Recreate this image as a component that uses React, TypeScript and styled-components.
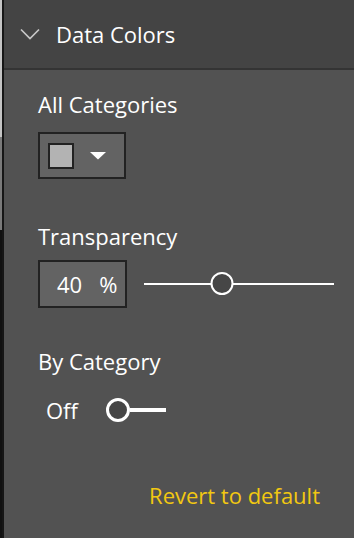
import React from "react";
import styled, { createGlobalStyle } from "styled-components";

const Global = createGlobalStyle`
  html, body { margin: 0; padding: 0; background: #525252; }
  body { font-family: "Open Sans", "Noto Sans", sans-serif; }
  #root { width: 354px; height: 538px; }
`;

const Frame = styled.div`
  display: flex;
  width: 354px;
  height: 538px;
  overflow: hidden;
`;

const EdgeStrip = styled.div`
  width: 2px;
  flex: none;
  background: linear-gradient(#c4c4c4 0 137px, #7a7a7a 137px 230px, #111 230px);
`;

const EdgeLine = styled.div`
  width: 2px;
  flex: none;
  background: #161616;
`;

const Pane = styled.div`
  flex: 1;
  display: flex;
  flex-direction: column;
  background: #525252;
  color: #fff;
  font-size: 22px;
`;

const Header = styled.div`
  height: 70px;
  flex: none;
  display: flex;
  align-items: center;
  gap: 16px;
  padding-left: 16px;
  background: #444444;
  border-bottom: 2px solid #343434;
  box-sizing: border-box;
  line-height: 30px;
`;

const Body = styled.div`
  display: flex;
  flex-direction: column;
  padding: 19px 0 0 34px;
`;

const Label = styled.div<{ $top?: number }>`
  line-height: 30px;
  margin-top: ${(p) => p.$top ?? 0}px;
`;

const ColorButton = styled.div`
  margin-top: 13px;
  width: 88px;
  height: 47px;
  box-sizing: border-box;
  border: 2px solid #222;
  background: #636363;
  display: flex;
  align-items: center;
  padding-left: 8px;
  gap: 16px;
`;

const Swatch = styled.div`
  width: 26px;
  height: 26px;
  box-sizing: border-box;
  border: 2px solid #222;
  background: #b3b3b3;
  margin-top: 1px;
`;

const Row = styled.div<{ $top?: number; $gap?: number }>`
  display: flex;
  align-items: center;
  gap: ${(p) => p.$gap ?? 0}px;
  margin-top: ${(p) => p.$top ?? 0}px;
`;

const PercentBox = styled.div`
  width: 89px;
  height: 48px;
  box-sizing: border-box;
  border: 2px solid #222;
  background: #636363;
  display: flex;
  align-items: center;
  padding-left: 17px;
  gap: 17px;
  line-height: 30px;
`;

const Slider = styled.div`
  position: relative;
  width: 190px;
  height: 24px;
  margin-left: 17px;
  display: flex;
  align-items: center;
`;

const Track = styled.div`
  width: 100%;
  height: 2px;
  background: #fff;
`;

const Thumb = styled.div`
  position: absolute;
  top: 0px;
  width: 23px;
  height: 23px;
  box-sizing: border-box;
  border: 2px solid #fff;
  border-radius: 50%;
  background: #464646;
  transform: translateX(-50%);
`;

const OffText = styled.span`
  line-height: 30px;
  margin-left: 8px;
`;

const Toggle = styled.div`
  display: flex;
  align-items: center;
`;

const Knob = styled.div`
  width: 24px;
  height: 24px;
  box-sizing: border-box;
  border: 3px solid #fff;
  border-radius: 50%;
  background: #464646;
`;

const KnobLine = styled.div`
  width: 36px;
  height: 4px;
  background: #fff;
`;

const Revert = styled.div`
  margin-top: 55px;
  align-self: flex-end;
  margin-right: 34px;
  color: #f2c811;
  line-height: 30px;
`;

const Chevron = () => (
  <svg width="20" height="12" viewBox="0 0 20 12">
    <path d="M1 1.5 L10 10.5 L19 1.5" fill="none" stroke="#c8c8c8" strokeWidth="1.7" />
  </svg>
);

const Caret = () => (
  <svg width="16" height="8" viewBox="0 0 16 8">
    <path d="M0 0 H16 L8 7.5 Z" fill="#fff" />
  </svg>
);

export default function App() {
  const value = 40;
  return (
    <>
      <Global />
      <Frame>
        <EdgeStrip />
        <EdgeLine />
        <Pane>
          <Header>
            <Chevron />
            <span>Data Colors</span>
          </Header>
          <Body>
            <Label>All Categories</Label>
            <ColorButton>
              <Swatch />
              <Caret />
            </ColorButton>
            <Label $top={42}>Transparency</Label>
            <Row $top={9}>
              <PercentBox>
                <span>{value}</span>
                <span>%</span>
              </PercentBox>
              <Slider>
                <Track />
                <Thumb style={{ left: `${value + 1}%` }} />
              </Slider>
            </Row>
            <Label $top={38}>By Category</Label>
            <Row $top={19} $gap={28}>
              <OffText>Off</OffText>
              <Toggle>
                <Knob />
                <KnobLine />
              </Toggle>
            </Row>
            <Revert>Revert to default</Revert>
          </Body>
        </Pane>
      </Frame>
    </>
  );
}
